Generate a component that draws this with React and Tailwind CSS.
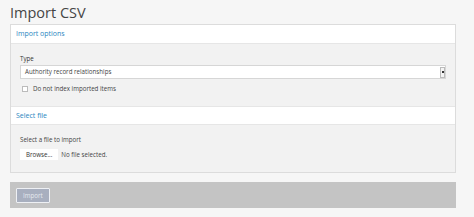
import React from 'react';

// Import CSV form
export default function App() {
  return (
    <div className="w-[474px] h-[217px] bg-[#f6f6f6] overflow-hidden text-[#444]" style={{ fontFamily: '"Open Sans", sans-serif' }}>
      <div className="pl-[10px] pr-[18px]">
        <h1 className="text-[14.5px] leading-[24px] pt-[1px] h-[24px] text-[#454545]">Import CSV</h1>

        <div className="border border-[#dcdcdc] bg-[#f2f2f2]">
          <div className="bg-white h-[19px] px-[5px] flex items-center border-b border-[#e6e6e6]">
            <span className="text-[7px] text-[#2a86c0]">Import options</span>
          </div>
          <div className="px-[9px] pt-[10px] pb-[13px]">
            <div className="text-[6.2px] leading-[9px] text-[#333]">Type</div>
            <div className="mt-[2px] h-[14px] bg-white border border-[#d6d6d6] flex items-center justify-between pl-[4px] pr-[0px]">
              <span className="text-[6.2px] text-[#444]">Authority record relationships</span>
              <span className="w-[5px] h-[11px] border border-[#bbb] bg-[#f4f4f4] flex items-center justify-center">
                <span className="w-[2px] h-[2px] bg-[#333]" />
              </span>
            </div>
            <div className="mt-[5px] flex items-center gap-[5px] pl-[2px]">
              <span className="w-[6px] h-[6px] border border-[#bbb] bg-white" />
              <span className="text-[6.2px] text-[#444]">Do not index imported items</span>
            </div>
          </div>

          <div className="bg-white h-[19px] px-[5px] flex items-center border-y border-[#e6e6e6]">
            <span className="text-[7px] text-[#2a86c0]">Select file</span>
          </div>
          <div className="px-[9px] pt-[10px] pb-[12px]">
            <div className="text-[6.2px] leading-[9px] text-[#444]">Select a file to import</div>
            <div className="mt-[5px] flex items-center gap-[3px]">
              <span className="bg-white px-[6px] h-[11px] flex items-center text-[6.2px] text-[#333]">Browse...</span>
              <span className="text-[6.2px] text-[#444]">No file selected.</span>
            </div>
          </div>
        </div>

        <div className="mt-[9px] h-[26px] bg-[#c4c4c4] flex items-center px-[6px]">
          <span className="h-[15px] px-[6px] flex items-center bg-[#a8afbf] border border-[#eef0f4] text-[6.2px] text-[#e6e9ef] rounded-[1px]">Import</span>
        </div>
      </div>
    </div>
  );
}
